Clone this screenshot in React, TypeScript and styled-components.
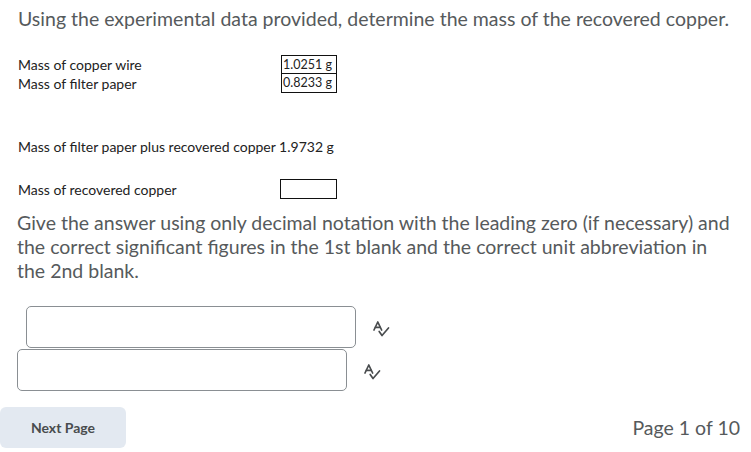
import styled, { createGlobalStyle } from "styled-components";

const Global = createGlobalStyle`
  html, body { margin: 0; padding: 0; background: #fff; }
  body { font-family: Lato, "Noto Sans", sans-serif; color: #565a5c; }
`

function SpellIcon() {
  return (
    <svg width="17" height="16" viewBox="0 0 17 16" fill="none" stroke="#494c4e" strokeWidth="1.7" strokeLinecap="round" strokeLinejoin="round">
      <path d="M1 9 L4.8 1 L8.6 9" />
      <path d="M2.4 6.4 H7.2" />
      <path d="M6.2 10.5 L9 14.5 L15.5 7" />
    </svg>
  )
}

export default function App() {
  return (
    <Page>
      <Global />
      <Heading>Using the experimental data provided, determine the mass of the recovered copper.</Heading>

      <DataBlock>
        <DataRow>
          <Label>Mass of copper wire</Label>
          <Cell>1.0251 g</Cell>
        </DataRow>
        <DataRow>
          <Label>Mass of filter paper</Label>
          <Cell $joined>0.8233 g</Cell>
        </DataRow>
      </DataBlock>

      <PlainLine>Mass of filter paper plus recovered copper 1.9732 g</PlainLine>

      <DataRow $tall>
        <Label>Mass of recovered copper</Label>
        <EmptyCell />
      </DataRow>

      <Instructions>
        Give the answer using only decimal notation with the leading zero (if necessary) and
        the correct significant figures in the 1st blank and the correct unit abbreviation in
        the 2nd blank.
      </Instructions>

      <Answers>
        <AnswerRow $indent={26}>
          <AnswerInput type="text" aria-label="Blank 1" />
          <IconSlot><SpellIcon /></IconSlot>
        </AnswerRow>
        <AnswerRow $indent={17}>
          <AnswerInput type="text" aria-label="Blank 2" />
          <IconSlot><SpellIcon /></IconSlot>
        </AnswerRow>
      </Answers>

      <Footer>
        <NextButton>Next Page</NextButton>
        <PageCount>Page 1 of 10</PageCount>
      </Footer>
    </Page>
  )
}

const Page = styled.div`
  width: 751px;
  height: 452px;
  box-sizing: border-box;
  display: flex;
  flex-direction: column;
  overflow: hidden;
`

const Heading = styled.div`
  font-size: 19.5px;
  line-height: 24px;
  padding: 7px 0 0 18px;
  color: #565a5c;
  white-space: nowrap;
`

const DataBlock = styled.div`
  margin-top: 24px;
  display: flex;
  flex-direction: column;
`

const DataRow = styled.div<{ $tall?: boolean }>`
  display: flex;
  align-items: center;
  padding-left: 18px;
  height: ${p => (p.$tall ? "20px" : "19px")};
  margin-top: ${p => (p.$tall ? "22px" : "0")};
  font-family: Lato, sans-serif;
  font-size: 14px;
  color: #222;
`

const Label = styled.div`
  width: 263px;
  flex: none;
`

const Cell = styled.div<{ $joined?: boolean }>`
  border: 1px solid #111;
  border-top-width: ${p => (p.$joined ? "0" : "1px")};
  width: 56px;
  height: 19px;
  line-height: 17px;
  padding: 0 1px;
  box-sizing: border-box;
  font-size: 12.5px;
  white-space: nowrap;
  overflow: hidden;
`

const EmptyCell = styled.div`
  width: 57px;
  height: 20px;
  margin-left: -1px;
  border: 1.5px solid #111;
  box-sizing: border-box;
`

const PlainLine = styled.div`
  margin-top: 44px;
  padding-left: 18px;
  font-family: Lato, sans-serif;
  font-size: 14px;
  line-height: 20px;
  color: #222;
`

const Instructions = styled.p`
  margin: 12px 0 0;
  padding: 0 16px 0 17px;
  font-size: 19.5px;
  line-height: 24px;
  color: #565a5c;
`

const Answers = styled.div`
  margin-top: 23px;
  display: flex;
  flex-direction: column;
  gap: 1px;
`

const AnswerRow = styled.div<{ $indent: number }>`
  display: flex;
  align-items: center;
  padding-left: ${p => p.$indent}px;
`

const AnswerInput = styled.input`
  width: 330px;
  height: 42px;
  box-sizing: border-box;
  border: 1px solid #8a8f93;
  border-radius: 5px;
  background: #fff;
  outline: none;
  padding: 0 10px;
  font: inherit;
`

const IconSlot = styled.div`
  display: flex;
  margin-left: 17px;
  margin-top: 4px;
`

const Footer = styled.div`
  margin-top: auto;
  margin-bottom: 4px;
  display: flex;
  align-items: center;
  justify-content: space-between;
  padding-right: 11px;
`

const NextButton = styled.button`
  width: 126px;
  height: 41px;
  border: none;
  border-radius: 6px;
  background: #e3e9f1;
  color: #494c4e;
  font-family: Lato, "Noto Sans", sans-serif;
  font-size: 14px;
  font-weight: 700;
  cursor: pointer;
`

const PageCount = styled.div`
  font-size: 19.5px;
  color: #565a5c;
`
